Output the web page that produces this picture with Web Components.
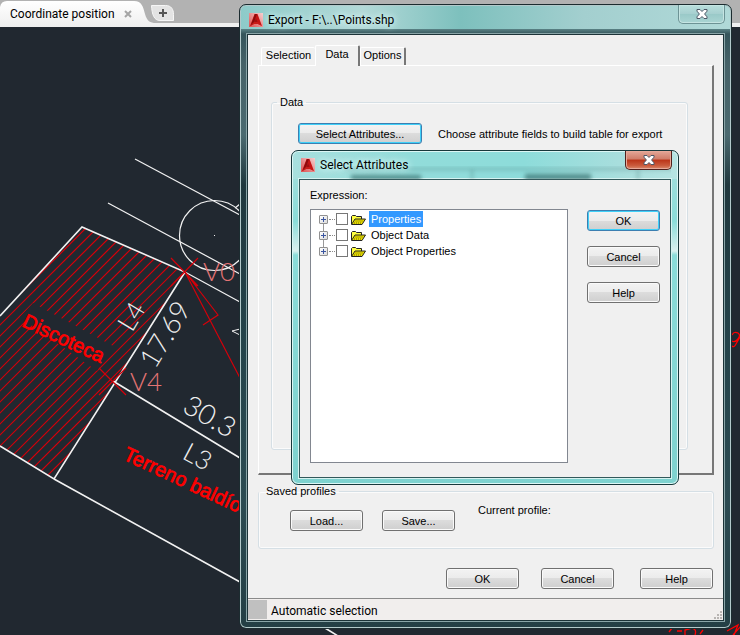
<!DOCTYPE html>
<html lang="en">
<head>
<meta charset="utf-8">
<title>Export</title>
<style>
html,body{margin:0;height:100%}
body{font:11px/16px "Liberation Sans",Arial,sans-serif;color:#000;background:#212830;overflow:hidden}
</style>
</head>
<body>
<cad-app></cad-app>
<script>
const APP_ICON = `<svg class="icon" viewBox="0 0 14 14" width="14" height="14" aria-hidden="true"><defs><linearGradient id="g" x1="0" y1="1" x2="1" y2="0"><stop offset="0" stop-color="#dc5050"/><stop offset="1" stop-color="#f6d0d0"/></linearGradient></defs><rect width="14" height="14" fill="url(#g)"/><path d="M1 13L5.500 1h3L13 13l-4-2H5z" fill="#c41414"/><path d="M1.500 13L6 1h2L6.500 5 5 9.500z" fill="#8c0c0c"/><path d="M7 5l1.500 4h-3z" fill="#a01010"/><path d="M5 9h4l4 4-4-2H5l-4 2z" fill="#c81c18"/></svg>`;

function define(name, html, setup) {
  customElements.define(name, class extends HTMLElement {
    constructor() {
      super();
      this.attachShadow({mode: 'open'}).innerHTML = '<style>*{box-sizing:border-box}</style>' + html;
      if (setup) setup(this, this.shadowRoot);
    }
  });
}

define('push-button', `
<style>
:host{display:inline-flex;width:73px;height:21px;flex:none}
button{flex:1;font:inherit;color:#000;padding:0;border:1px solid #707070;border-radius:3px;
 background:linear-gradient(#f3f3f3,#ebebeb 50%,#dcdcdc 50%,#cfcfcf);box-shadow:inset 0 0 0 1px #fafafa}
:host([default]) button{border-color:#3c7fb1;box-shadow:inset 0 0 0 1px #3fd0f8}
</style><button type="button"><slot></slot></button>`);

define('group-box', `
<style>
:host{display:block}
fieldset{height:100%;margin:0;min-width:0;padding:0;border:1px solid #d5dfe5;border-radius:3px;box-shadow:inset 0 0 0 1px #fbfbfb}
legend{margin-left:5px;padding:0 3px;height:16px}
:host(.saved) legend{margin-left:0}
</style><fieldset><legend><slot name="label"></slot></legend><slot></slot></fieldset>`);

define('app-window', `
<style>
:host{display:flex;flex-direction:column;padding:0 7px 7px;border:1px solid #1c2c30;border-radius:7px;
 box-shadow:inset 0 0 0 1px #b3c9ca;background:linear-gradient(90deg,#8dcbc9,#b2d9d8 25%,#7dc0bd 45%,#a3cfcf 70%,#b0d9d8) top/100% 24px no-repeat,
 linear-gradient(#78a6a7 20px,#35555b 29px,#466268 60px,#4b6a70 130px,#20383e 180px,#25444b 55%,#2c4b52 80%,#243f45)}
:host([light]){border-color:#17383b;box-shadow:inset 0 0 0 1px #dcf7f5;padding-bottom:6px;
 background:linear-gradient(90deg,#a8e0de,#92dcda 30%,#8ddcda 60%,#a8dedd 85%,#b6e4e2) top/100% 28px no-repeat,linear-gradient(#a9dfdd,#8adcd9 70px,#d9f0ef 100px,#8adcd9 104px,#7ed2cf)}
header{display:flex;align-items:center;height:29px;padding-left:2px;gap:5px;flex:none;position:relative}
:host([light]) header{height:28px}
h1{flex:1;margin:0;font:12px/20px Roboto,"Noto Sans",sans-serif;text-shadow:0 0 6px #dff,0 0 9px #dff}
.close{align-self:flex-start;width:47px;height:19px;padding:0;border:1px solid #6d9395;border-top:0;border-radius:0 0 5px 5px;
 background:linear-gradient(#b9dfdd,#a6cfcf 50%,#99c9c8 50%,#aad5d3);box-shadow:inset 0 0 0 1px #c6e5e3;display:grid;place-items:center;margin-right:-1px}
:host([light]) .close{border-color:#51201c;background:linear-gradient(#e3a798,#cf7c68 45%,#bb3418 50%,#ca5a3c 80%,#d98a6c);box-shadow:inset 0 0 0 1px #e7a999}
.ghost{position:absolute;inset:14px 0 0 0;overflow:hidden;pointer-events:none;display:none}
:host([light]) .ghost{display:block}
h1,.icon,.close{position:relative}
main{flex:1;display:flex;flex-direction:column;min-height:0;background:#f0f0f0;border:1px solid #1c3338;box-shadow:0 0 0 1px #8aa5a8}
:host([light]) main{border-color:#33595b;box-shadow:0 0 0 1px #d5f3f1}
</style>
<header><svg class="ghost" width="372" height="14" aria-hidden="true"><defs><filter id="b"><feGaussianBlur stdDeviation="2"/></filter></defs><g filter="url(#b)" fill="#3e7876"><path d="M45 3h330v2H45zM172 3h2v12h-2zM338 5h2v10h-2z" opacity=".45"/><path d="M52 10h70v5H52zM226 9h66v6h-66z" opacity=".8"/></g></svg>${APP_ICON}<h1></h1>
<button class="close" type="button" aria-label="Close"><svg width="12" height="10" viewBox="0 0 12 10"><path d="M1 .5h3l2 2 2-2h3v1.700L8.600 5 11 7.800v1.700H8l-2-2-2 2H1V7.800L3.400 5 1 2.200z" fill="#fff" stroke="#4c5766"/></svg></button></header>
<main><slot></slot></main>`, (el, root) => { root.querySelector('h1').textContent = el.getAttribute('caption'); });

define('file-tabs', `
<style>
:host{display:flex;position:relative;height:27px;background:linear-gradient(#b2b2b2 23px,#f0f0f0 23px);font:12px/20px Roboto,"Noto Sans",sans-serif}
.tab{position:relative;display:flex;align-items:center;justify-content:space-between;width:158px;padding:0 26px 0 10px}
.shape{position:absolute;left:0;top:0}
span,button{position:relative}
button{border:0;padding:0;background:none;display:grid}
.add{margin:5px 0 0 -7px;align-self:flex-start}
</style>
<div class="tab"><svg class="shape" width="158" height="27" aria-hidden="true"><defs><linearGradient id="t" x2="0" y2="1"><stop stop-color="#fff"/><stop offset="1" stop-color="#efefef"/></linearGradient></defs><path d="M0 27V7Q1 1 7 1h127c8 0 9 6 11 13s5 9 11 9v4z" fill="url(#t)"/></svg>
<span>Coordinate position</span><button type="button" aria-label="Close tab"><svg width="8" height="8" viewBox="0 0 8 8"><path d="M1 1l6 6M7 1L1 7" stroke="#a5a5a5" stroke-width="2"/></svg></button></div>
<button class="add" type="button" aria-label="New tab"><svg width="23" height="16" viewBox="0 0 23 16"><path d="M.5.500h14c6 0 8 4 8 9v6H9c-6 0-8-6-8.500-15z" fill="#e3e3e3" stroke="#f6f6f6"/><path d="M8 8h8M12 4v8" stroke="#555" stroke-width="2"/></svg></button>`);

define('cad-drawing', `
<style>
:host{display:block}
svg{display:block;fill:none;stroke:#f2f2f2}
text{stroke:none;fill:#eee;font:300 26px Lato,"Liberation Sans",sans-serif}
.big{font-size:28px}
.pink{fill:#e47474}.label{font:20px "Liberation Sans",sans-serif;fill:#f00;stroke:#f00;stroke-width:.7px}
.red{stroke:#d4000a;stroke-width:1.2px}
</style>
<svg width="740" height="635" role="img" aria-label="Site plan">
<defs><clipPath id="lot"><path clip-rule="evenodd" d="M82 227L185 272 54 479 0 446V316zM20 317L33 303 113 346 97 371z"/></clipPath></defs>
<path class="red hatch" clip-path="url(#lot)"/>
<g stroke-width="1.200"><path d="M135 159L240 215M108 203L240 274M185 272L240 302"/><circle cx="214.500" cy="235.500" r="35"/><path d="M235 208l5-4"/></g>
<path stroke-width="1.600" d="M0 316L82 227 185 272 54 479 0 446M54 479L240 582M113 381L240 458M325 628l13 8"/>
<path d="M214 235.500h1M240 335l-8-4 8-2"/>
<path class="red" d="M171 258l27 28M198 258l-27 28M99 368l27 27M126 368l-27 27M185 272L240 378M185 272l33 43-15 10M185 272l12 14"/>
<text class="pink" x="203" y="281">V0</text><text class="pink" x="130" y="391">V4</text>
<text transform="translate(132 333) rotate(-59)">L4</text>
<text class="big" transform="translate(155 370) rotate(-59)">17.69</text>
<text class="big" transform="translate(181 411) rotate(30)">30.3</text>
<text transform="translate(181 458) rotate(28)">L3</text>
<text class="label" transform="translate(21 326) rotate(25)">Discoteca</text>
<text class="label" transform="translate(122 459) rotate(25)">Terreno baldío</text>
<g stroke="#f00" stroke-width="1.300"><path d="M732 335q2-4 6-2 3 2 0 6t-6 2M740 337l-4 7q-2 4-4 2"/><path d="M669 632l3-4h6M677 631h5M685 635v-5l7-2q5 1 3 7M700 634l3-4M727 631l11-6-4 10M733 635l8-9"/></g>
</svg>`, (el, root) => {
  let d = '';
  for (let c = 314; c < 540; c += 11) d += `M-10 ${c + 10}L200 ${c - 200}`;
  root.querySelector('.hatch').setAttribute('d', d);
});

define('tab-panel', `
<style>
:host{display:flex;flex-direction:column}
nav{display:flex;align-items:flex-end;padding-left:3px;height:20px;flex:none}
button{font:inherit;width:54px;padding:0 0 4px;height:18px;line-height:14px;border:1px solid #fff;border-bottom:0;border-right:0;border-radius:2px 2px 0 0;background:#f0f0f0;white-space:nowrap}
button[aria-selected=true]{width:45px;height:21px;border-right:2px solid #777;margin-bottom:-1px;position:relative}
button:last-child{width:46px;border-right:2px solid #777}
section{flex:1;border:solid;border-width:1px 2px 2px 1px;border-color:#fff #777 #777 #fff;display:flex;flex-direction:column;padding:28px 24px 23px 12px}
</style><nav role="tablist"><button role="tab" type="button" aria-selected="false">Selection</button><button role="tab" type="button" aria-selected="true">Data</button><button role="tab" type="button" aria-selected="false">Options</button></nav>
<section role="tabpanel"><slot></slot></section>`);

define('tree-item', `
<style>
:host{display:grid;grid-template-columns:9px 6px 12px 14px auto;align-items:center;justify-content:start;height:16px;column-gap:1px}
.exp{width:9px;height:9px;padding:0;border:1px solid #919191;border-radius:1px;background:linear-gradient(135deg,#fff,#dcdcdc);display:grid;place-items:center}
i{height:0;border-top:1px dotted #888}
input{appearance:none;width:12px;height:12px;margin:0;border:1px solid #777;background:#fff}
svg.f{margin-left:2px}
label{margin-left:5px;padding:0 2px;height:16px;line-height:16px;white-space:nowrap}
:host([selected]) label{background:#3399ff;color:#fff}
</style>
<button class="exp" type="button" aria-label="Expand"><svg width="7" height="7"><path d="M1 3.500h5M3.500 1v5" stroke="#3a55a0"/></svg></button><i></i><input type="checkbox" id="c"><svg class="f" width="15" height="11" viewBox="0 0 15 11" aria-hidden="true"><path d="M.5 10V2.500l1-1h3l1 1h5V5" fill="#ffff40" stroke="#222"/><path d="M.5 10.500L4 5h10.500L11 10.500z" fill="#e6dc00" stroke="#222"/><path d="M3 9h8M4.500 7h8" stroke="#776c00" stroke-dasharray="1 1"/></svg><label for="c"><slot></slot></label>`);

define('export-form', `
<style>
:host{flex:1;display:flex;flex-direction:column;min-height:0}
.body{flex:1;display:flex;flex-direction:column;padding:10px 9px 9px 10px}
tab-panel{flex:1}
.data{flex:1}
.row{display:flex;align-items:center}
.data .row{padding:13px 0 0 26px;gap:16px}
.data push-button{width:124px}
.saved{height:66px;margin-top:8px}
.saved .row{padding:3px 0 0 31px;gap:19px;align-items:flex-start}
.saved push-button{margin-top:8px}
.saved span{margin-left:4px}
.actions{display:flex;justify-content:flex-end;gap:22px;padding:19px 1px 0 0}
.actions push-button:last-child{margin-left:4px}
footer{display:flex;align-items:center;height:22px;border-top:1px solid #8a8a8a;background:#f1eeed;font:12px/20px Roboto,"Noto Sans",sans-serif}
footer b{width:19px;height:19px;background:#c0c0c0;margin-right:4px}
footer span{flex:1;padding-top:3px}footer svg{align-self:flex-end}
</style>
<div class="body">
<tab-panel><group-box class="data"><span slot="label">Data</span><div class="row"><push-button default>Select Attributes...</push-button><span>Choose attribute fields to build table for export</span></div></group-box></tab-panel>
<group-box class="saved"><span slot="label">Saved profiles</span><div class="row"><push-button>Load...</push-button><push-button>Save...</push-button><span>Current profile:</span></div></group-box>
<div class="actions"><push-button>OK</push-button><push-button>Cancel</push-button><push-button>Help</push-button></div>
</div>
<footer><b></b><span>Automatic selection</span><svg width="10" height="10" aria-hidden="true"><path d="M1 8h2M4 8h2M7 8h2M4 5h2M7 5h2M7 2h2" stroke="#b8b4b2" stroke-width="2"/></svg></footer>`);

define('attribute-form', `
<style>
:host{flex:1;display:flex;gap:19px;padding:7px 10px 14px 10px;min-height:0}
.left{flex:1;display:flex;flex-direction:column}
.tree{flex:1;margin-top:6px;border:1px solid #828790;padding:1px 0 0 8px;background:linear-gradient(#999,#999) 12px 9px/1px 32px no-repeat #fff}
.right{display:flex;flex-direction:column;gap:15px;padding-top:23px}
</style>
<div class="left"><span id="e">Expression:</span><div class="tree" role="group" aria-labelledby="e"><tree-item selected>Properties</tree-item><tree-item>Object Data</tree-item><tree-item>Object Properties</tree-item></div></div>
<div class="right"><push-button default>OK</push-button><push-button>Cancel</push-button><push-button>Help</push-button></div>`);

define('cad-app', `
<style>
:host{display:block;position:relative;height:100vh;overflow:hidden}
cad-drawing{position:absolute;inset:0}
.main{position:absolute;inset:4px 8px 6px 239px}
.sub{position:absolute;inset:150px 61px 150px 291px}
</style>
<cad-drawing></cad-drawing><file-tabs></file-tabs>
<app-window class="main" caption="Export - F:\\..\\Points.shp"><export-form></export-form></app-window>
<app-window class="sub" light caption="Select Attributes"><attribute-form></attribute-form></app-window>`);
</script>
</body>
</html>
